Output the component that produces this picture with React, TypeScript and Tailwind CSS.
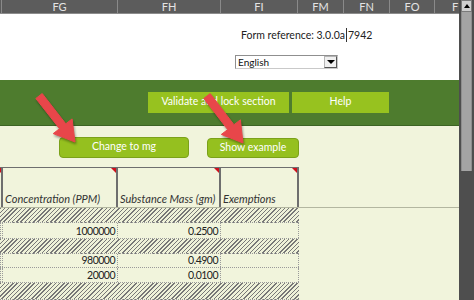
type Pt = [number, number];

// builds an arrow outline from tail to tip
function arrowPoints(tail: Pt, tip: Pt, shaft = 4, head = 12, headLen = 20) {
  const dx = tip[0] - tail[0];
  const dy = tip[1] - tail[1];
  const len = Math.hypot(dx, dy);
  const ux = dx / len;
  const uy = dy / len;
  const nx = -uy;
  const ny = ux;
  const bx = tip[0] - ux * headLen;
  const by = tip[1] - uy * headLen;
  const pts: Pt[] = [
    [tail[0] + nx * shaft, tail[1] + ny * shaft],
    [bx + nx * shaft, by + ny * shaft],
    [bx + nx * head, by + ny * head],
    tip,
    [bx - nx * head, by - ny * head],
    [bx - nx * shaft, by - ny * shaft],
    [tail[0] - nx * shaft, tail[1] - ny * shaft],
  ];
  return pts.map((p) => `${p[0].toFixed(1)},${p[1].toFixed(1)}`).join(" ");
}

const hatch =
  "bg-[repeating-linear-gradient(135deg,#777_0px,#777_1px,#eef1d8_1px,#eef1d8_3px)]";

function RedMark() {
  return (
    <div className="absolute right-0 top-0 w-0 h-0 border-l-[5px] border-l-transparent border-t-[5px] border-t-[#d0101c]" />
  );
}

function HatchRow({ h }: { h: string }) {
  return (
    <div className={`w-[299px] ${h} ${hatch} border-b border-dotted border-[#9a9a9a]`} />
  );
}

function DataRow({ h, a, b }: { h: string; a?: string; b?: string }) {
  return (
    <div className={`flex ${h} w-[299px] border-b border-dotted border-[#9a9a9a] text-[10.5px] tracking-[-0.5px] text-[#222] leading-none`}>
      <div className="w-[3px] border-l border-r border-dotted border-[#9a9a9a]" />
      <div className="w-[115px] flex items-center justify-end pr-[2px] border-r border-dotted border-[#9a9a9a]">
        {a}
      </div>
      <div className="w-[103px] flex items-center justify-end pr-[2px] border-r border-dotted border-[#9a9a9a]">
        {b}
      </div>
      <div className="w-[78px] border-r border-dotted border-[#9a9a9a]" />
    </div>
  );
}

export default function App() {
  return (
    <div className="w-[474px] h-[300px] overflow-hidden relative flex bg-[#f1f4dc] font-['Lato','Liberation_Sans',sans-serif]">
      <div className="w-[459px] flex flex-col">
        {/* column letters */}
        <div className="h-[14px] flex bg-[#5c5c5c] text-[11px] leading-[13px] text-[#e4e4e4] border-b border-[#8c8c8c]">
          <div className="w-[2px] border-r border-[#8a8a8a]" />
          <div className="w-[116px] text-center border-r border-[#8a8a8a]">FG</div>
          <div className="w-[103px] text-center border-r border-[#8a8a8a]">FH</div>
          <div className="w-[77px] text-center border-r border-[#8a8a8a]">FI</div>
          <div className="w-[46px] text-center border-r border-[#8a8a8a]">FM</div>
          <div className="w-[46px] text-center border-r border-[#8a8a8a]">FN</div>
          <div className="w-[45px] text-center border-r border-[#8a8a8a]">FO</div>
          <div className="flex-1 pl-[17px]">F</div>
        </div>

        {/* white info area */}
        <div className="h-[66px] bg-white flex flex-col pl-[241px] pt-[14px]">
          <div className="text-[10.5px] leading-[14px] text-[#222] flex items-center">
            Form reference: 3.0.0a
            <span className="inline-block w-px h-[14px] bg-[#333] mx-[1px]" />
            7942
          </div>
          <div className="mt-[13px] -ml-[6px] w-[103px] h-[14px] flex border border-[#8f8f8f] border-b-[#c9c9c9] border-r-[#c9c9c9] bg-white">
            <div className="flex-1 text-[10px] leading-[12px] pl-[2px] text-[#111]">English</div>
            <div className="w-[13px] flex items-center justify-center border border-[#b5b5b5] border-r-[#555] border-b-[#555] bg-[#f0f0f0]">
              <div className="w-0 h-0 border-l-[4px] border-r-[4px] border-t-[4px] border-l-transparent border-r-transparent border-t-black" />
            </div>
          </div>
        </div>

        {/* green band */}
        <div className="h-[46px] bg-[#4e7c2e] border-b border-[#3c6423] flex pl-[148px] pt-[12px] gap-[3px]">
          <div className="w-[141px] h-[21px] bg-[#97c21f] text-white text-[10.5px] flex items-center justify-center">
            Validate and lock section
          </div>
          <div className="w-[97px] h-[21px] bg-[#97c21f] text-white text-[10.5px] flex items-center justify-center">
            Help
          </div>
        </div>

        {/* action buttons */}
        <div className="flex pl-[59px] pt-[11px] gap-[18px] h-[41px]">
          <div className="w-[130px] h-[21px] rounded-[4px] bg-[#95c01f] border border-[#7ba11a] text-white text-[10.5px] flex items-center justify-center">
            Change to mg
          </div>
          <div className="w-[92px] h-[20px] mt-[1px] rounded-[4px] bg-[#95c01f] border border-[#7ba11a] text-white text-[10.5px] flex items-center justify-center">
            Show example
          </div>
        </div>

        {/* table header */}
        <div className="h-[42px] border-b border-[#b3b6a0] flex">
          <div className="flex w-[299px] border-t border-[#6e6e6e] text-[11px] italic text-[#333] leading-none">
            <div className="relative w-[3px] border-r-2 border-[#6e6e6e]">
              <RedMark />
            </div>
            <div className="relative w-[115px] border-r-2 border-[#6e6e6e] flex items-end pl-[2px] pb-[3px] whitespace-nowrap">
              Concentration (PPM)
              <RedMark />
            </div>
            <div className="relative w-[103px] border-r-2 border-[#6e6e6e] flex items-end pl-[2px] pb-[3px] whitespace-nowrap">
              Substance Mass (gm)
              <RedMark />
            </div>
            <div className="relative w-[78px] border-r-2 border-[#6e6e6e] flex items-end pl-[2px] pb-[3px]">
              Exemptions
              <RedMark />
            </div>
          </div>
        </div>

        {/* table body */}
        <HatchRow h="h-[15px]" />
        <DataRow h="h-[16px]" a="1000000" b="0.2500" />
        <HatchRow h="h-[15px]" />
        <DataRow h="h-[14px]" a="980000" b="0.4900" />
        <DataRow h="h-[15px]" a="20000" b="0.0100" />
        <HatchRow h="h-[17px]" />
      </div>

      {/* scrollbar */}
      <div className="w-[15px] bg-[#4e4e4e] flex flex-col px-[2px]">
        <div className="h-[12px] bg-[#cfcfcf] border border-[#7a7a7a] flex items-center justify-center">
          <div className="w-0 h-0 border-l-[3px] border-r-[3px] border-b-[4px] border-l-transparent border-r-transparent border-b-black" />
        </div>
        <div className="h-[159px] bg-[#a4a4a4] border-x border-[#8d8d8d]" />
      </div>

      {/* red callout arrows */}
      <svg
        className="absolute inset-0 pointer-events-none drop-shadow-[1px_2px_1px_rgba(0,0,0,0.35)]"
        width="474"
        height="300"
      >
        <polygon points={arrowPoints([39, 96], [75, 142])} fill="#e8464a" strokeLinejoin="round" stroke="#e8464a" strokeWidth="1" />
        <polygon points={arrowPoints([207, 96], [243, 143])} fill="#e8464a" strokeLinejoin="round" stroke="#e8464a" strokeWidth="1" />
      </svg>
    </div>
  );
}
